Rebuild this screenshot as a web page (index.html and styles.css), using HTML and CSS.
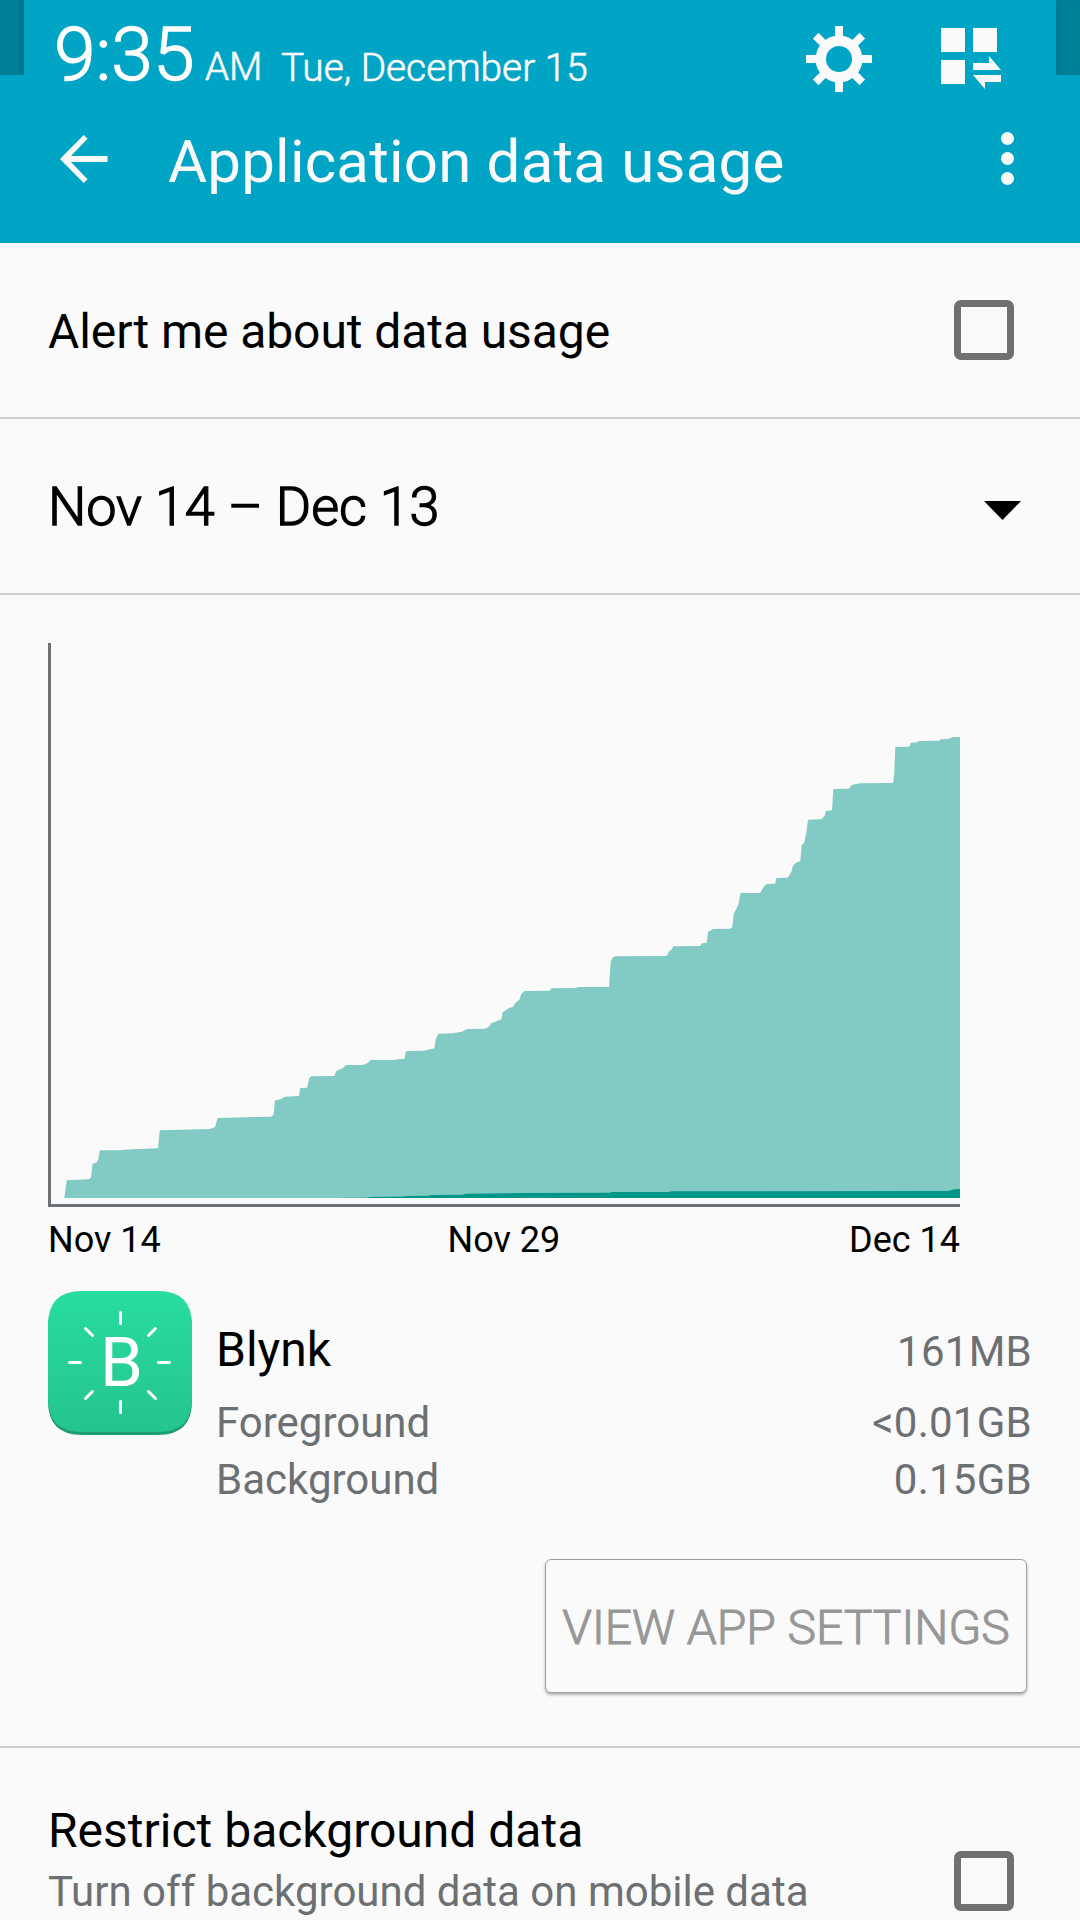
FILE: index.html
```html
<!DOCTYPE html>
<html lang="en">
<head>
<meta charset="utf-8">
<title>Application data usage</title>
<link rel="stylesheet" href="styles.css">
</head>
<body>
<div class="screen">
  <header class="header">
    <span class="edge edge-left"></span>
    <span class="edge edge-right"></span>
    <div class="status">
      <span class="clock">9:35</span>
      <span class="ampm">AM</span>
      <span class="date">Tue, December 15</span>
      <svg class="gear" width="66" height="66" viewBox="-33 -33 66 66">
        <circle r="18.2" fill="none" stroke="#fafafa" stroke-width="10.4"/>
        <path d="M0-33V-20M0 33V20M-33 0H-20M33 0H20M-23.3-23.3L-14-14M23.3-23.3L14-14M-23.3 23.3L-14 14M23.3 23.3L14 14" stroke="#fafafa" stroke-width="8"/>
      </svg>
      <svg class="panels" width="60" height="61" viewBox="0 0 60 61" fill="#fafafa">
        <path d="M0 0H24V24H0ZM32 0H56V24H32ZM0 32H24V56H0Z"/>
        <path d="M32 35H48V28L60 42H32ZM32 47H60V54H44V61Z"/>
      </svg>
    </div>
    <div class="titlebar">
      <svg class="back" width="48" height="48" viewBox="0 0 48 48" fill="#fafafa">
        <path d="M0 24L23.7 0L27.5 3.8L11 21H47.5V27H11L27.5 44.200L23.700 48Z"/>
      </svg>
      <h1 class="title">Application data usage</h1>
      <svg class="more" width="13" height="53" viewBox="0 0 13 53" fill="#fafafa">
        <circle cx="6.500" cy="6.500" r="6.500"/><circle cx="6.500" cy="26.500" r="6.500"/><circle cx="6.500" cy="46.500" r="6.500"/>
      </svg>
    </div>
  </header>

  <main>
    <section class="row">
      <span class="label">Alert me about data usage</span>
      <span class="checkbox"></span>
    </section>

    <section class="row">
      <span class="range">Nov 14 – Dec 13</span>
      <svg class="caret" width="37" height="19" viewBox="0 0 37 19"><path d="M0 0H37L18.500 19Z"/></svg>
    </section>

    <section class="usage">
      <svg class="chart" width="912" height="564" viewBox="48 643 912 564">
        <polygon fill="#81cbc4" points="64.3,1198 66.8,1180.2 88.5,1179.3 91,1177.5 92.5,1164 96.8,1162.3 98.3,1159.3 99.8,1150.3 118.3,1150.3 133.3,1149.2 158,1148.3 159.8,1130.3 210,1129 215,1127 217.7,1118 270.7,1116.7 273.6,1114.7 275,1100.3 280.7,1099.3 285,1096.7 299,1096 300,1088.3 307,1087.7 309.3,1078 311.7,1076.3 334.3,1076 336.3,1071 342.7,1068.3 346,1065 362.7,1065 367.3,1063.3 370.7,1060 392.3,1060 404.3,1058.7 406,1051.3 424,1050.7 434.3,1048.3 435.7,1039.3 438.3,1033.7 452.7,1033.3 461.7,1031.7 467.3,1029 485,1028.7 488.7,1027 491.3,1023.3 501.3,1019.3 502.7,1012.3 509,1008 513,1007 514.7,1003.7 519.3,999.7 521.3,994 524.3,991 549.7,990.7 551.3,988.3 575.7,988 578.3,987 609,987 610.7,961.7 612.3,958 615,956.3 665.7,956 667.7,954.7 669,951.3 671.3,950 673.3,946.3 700,946 702,943.3 706.7,942.7 708,931.7 713.3,929 730,928.7 732.3,927.3 733.7,914.3 738.3,904.7 740.5,893 760.3,893 763.3,887.3 766.7,884 775.3,883.7 776.3,878 787.7,877.7 791.3,872 793,865.7 796,862.7 800.3,861 801.7,844.7 804,843.3 806.3,833.3 808,819.7 821.3,819.3 824.7,815.7 826,811 832,810.3 833.3,789 849,788.7 851.7,785 860,783.3 893,783 894.3,773.3 895.3,747 909,746.7 911,742.7 917.3,742.3 919,741 939.3,740.7 941,739.3 948.7,738.7 953.3,737 960,737 960,1198"/>
        <polygon fill="#009688" points="342,1198 344,1197.800 367,1197.700 370,1197 404,1196.500 406,1196 428,1195.700 432,1195 462,1194.800 466,1193.700 520,1193 610,1192.700 612,1192 668,1192 672,1191.300 948,1191 954,1189.300 960,1189 960,1198"/>
        <path d="M49.500 643V1205.500H960" fill="none" stroke="#6c7276" stroke-width="3"/>
      </svg>
      <div class="axis">
        <span>Nov 14</span><span class="mid">Nov 29</span><span>Dec 14</span>
      </div>

      <div class="app">
        <svg class="app-icon" width="144" height="144" viewBox="0 0 144 144">
          <defs>
            <linearGradient id="face" x1="0" y1="0" x2="0" y2="1">
              <stop offset="0" stop-color="#28dc9f"/>
              <stop offset="1" stop-color="#25c48f"/>
            </linearGradient>
          </defs>
          <path fill="#1f9d73" d="M34 3H110Q144 3 144 37V110Q144 144 110 144H34Q0 144 0 110V37Q0 3 34 3Z"/>
          <path fill="url(#face)" d="M34 0H110Q144 0 144 34V107Q144 141 110 141H34Q0 141 0 107V34Q0 0 34 0Z"/>
          <path d="M72.500 21.500V32.500M72.500 110.500V121.500M21.500 71.500H32.500M110.500 71.500H121.500M37.500 37.500L44.500 44.500M107.500 37.500L100.500 44.500M37.500 107.500L44.500 100.500M107.500 107.500L100.500 100.500" stroke="#fff" stroke-width="3" stroke-linecap="round"/>
          <text class="app-letter" x="52" y="94.800">B</text>
        </svg>
        <dl class="stats">
          <div class="stat stat-total"><dt>Blynk</dt><dd>161MB</dd></div>
          <div class="stat"><dt>Foreground</dt><dd>&lt;0.01GB</dd></div>
          <div class="stat"><dt>Background</dt><dd>0.15GB</dd></div>
        </dl>
      </div>
      <button class="settings">VIEW APP SETTINGS</button>
    </section>

    <section class="restrict">
      <div class="restrict-text">
        <span class="label">Restrict background data</span>
        <span class="hint">Turn off background data on mobile data</span>
      </div>
      <span class="checkbox"></span>
    </section>
  </main>
</div>
</body>
</html>
```
FILE: styles.css
```css
* { box-sizing: border-box; }
html, body { margin: 0; }
body { font-family: Roboto, "Liberation Sans", sans-serif; background: #fafafa; color: #000; }
svg { display: block; flex: none; }
span { white-space: nowrap; }

.screen { width: 1080px; height: 1920px; overflow: hidden; display: flex; flex-direction: column; }

.header { position: relative; flex: none; height: 243px; background: #00a5c6; color: #fafafa; }
.edge { position: absolute; top: 0; width: 24px; height: 75px; background: #00819b; }
.edge-left { left: 0; box-shadow: inset -5px 0 6px -3px #006f88; }
.edge-right { right: 0; box-shadow: inset 5px 0 6px -3px #00768f; }

/* Light weight, thickened a little to sit between Light and Regular */
.clock, .ampm, .date, .range, .settings { -webkit-text-stroke: 1px currentColor; }

.status { display: flex; align-items: baseline; height: 100px; padding: 14px 79px 0 54px; }
.clock { font-size: 75px; line-height: 80px; width: 151px; color: #fff; font-weight: 300; letter-spacing: 0; -webkit-text-stroke-width: 1.3px; }
.ampm { font-size: 38.500px; width: 76px; font-weight: 300; -webkit-text-stroke-width: 0.6px; }
.date { font-size: 38.800px; font-weight: 300; position: relative; top: 1px; -webkit-text-stroke-width: 0.6px; }
.gear { align-self: flex-start; margin: 12px 0 0 auto; }
.panels { align-self: flex-start; margin: 14px 0 0 69px; }

.titlebar { display: flex; align-items: center; height: 118px; padding: 0 66px 0 60px; }
.title { flex: 1; margin: 5px 0 0 60px; font-size: 60px; font-weight: 400; line-height: 70px; letter-spacing: 0.2px; }
.more { margin-bottom: 1px; }

.row { display: flex; align-items: center; justify-content: space-between; height: 176px; padding: 0 66px 0 48px; border-bottom: 2px solid #cdcdcd; }
.label { font-size: 48px; line-height: 60px; }
.row .label { margin-top: 3px; letter-spacing: -0.08px; }
.range { font-size: 54px; line-height: 64px; margin-top: 1px; font-weight: 300; letter-spacing: -0.1px; -webkit-text-stroke-width: 1.3px; }
.caret { margin: 9px -7px 0 0; }
.checkbox { flex: none; width: 60px; height: 60px; border: 7px solid #707070; border-radius: 7px; }

.usage { display: flex; flex-direction: column; height: 1153px; padding: 48px 48px 0; border-bottom: 2px solid #cdcdcd; }
.axis { display: flex; justify-content: space-between; width: 912px; margin-top: 13px; font-size: 36px; line-height: 40px; }
.axis .mid { margin-right: 2px; }

.app { display: flex; gap: 24px; margin-top: 31px; }
.app-letter { font-size: 69px; fill: #fff; }
.stats { flex: 1; margin: 29px 0 0; color: #6c7073; font-size: 42px; line-height: 57px; }
.stat { display: flex; justify-content: space-between; align-items: baseline; }
.stat dd { margin: 0; letter-spacing: 0.25px; }
.stat-total { line-height: 60px; margin-bottom: 12px; }
.stat-total dt { font-size: 48px; color: #000; }

.settings { align-self: flex-end; width: 482px; height: 134px; margin: 51px 5px 0 0; padding: 3px 0 0; font: 300 48px/60px Roboto, "Liberation Sans", sans-serif; color: #979797; background: #fafafa; border: 1px solid #a0a0a0; border-radius: 6px; box-shadow: 0 2px 3px rgba(0, 0, 0, 0.3); white-space: nowrap; }

.restrict { display: flex; justify-content: space-between; height: 266px; padding: 53px 66px 0 48px; flex: none; }
.restrict-text { display: flex; flex-direction: column; gap: 6px; }
.hint { font-size: 42px; line-height: 50px; color: #6c7073; }
.restrict .checkbox { margin-top: 50px; }
```
